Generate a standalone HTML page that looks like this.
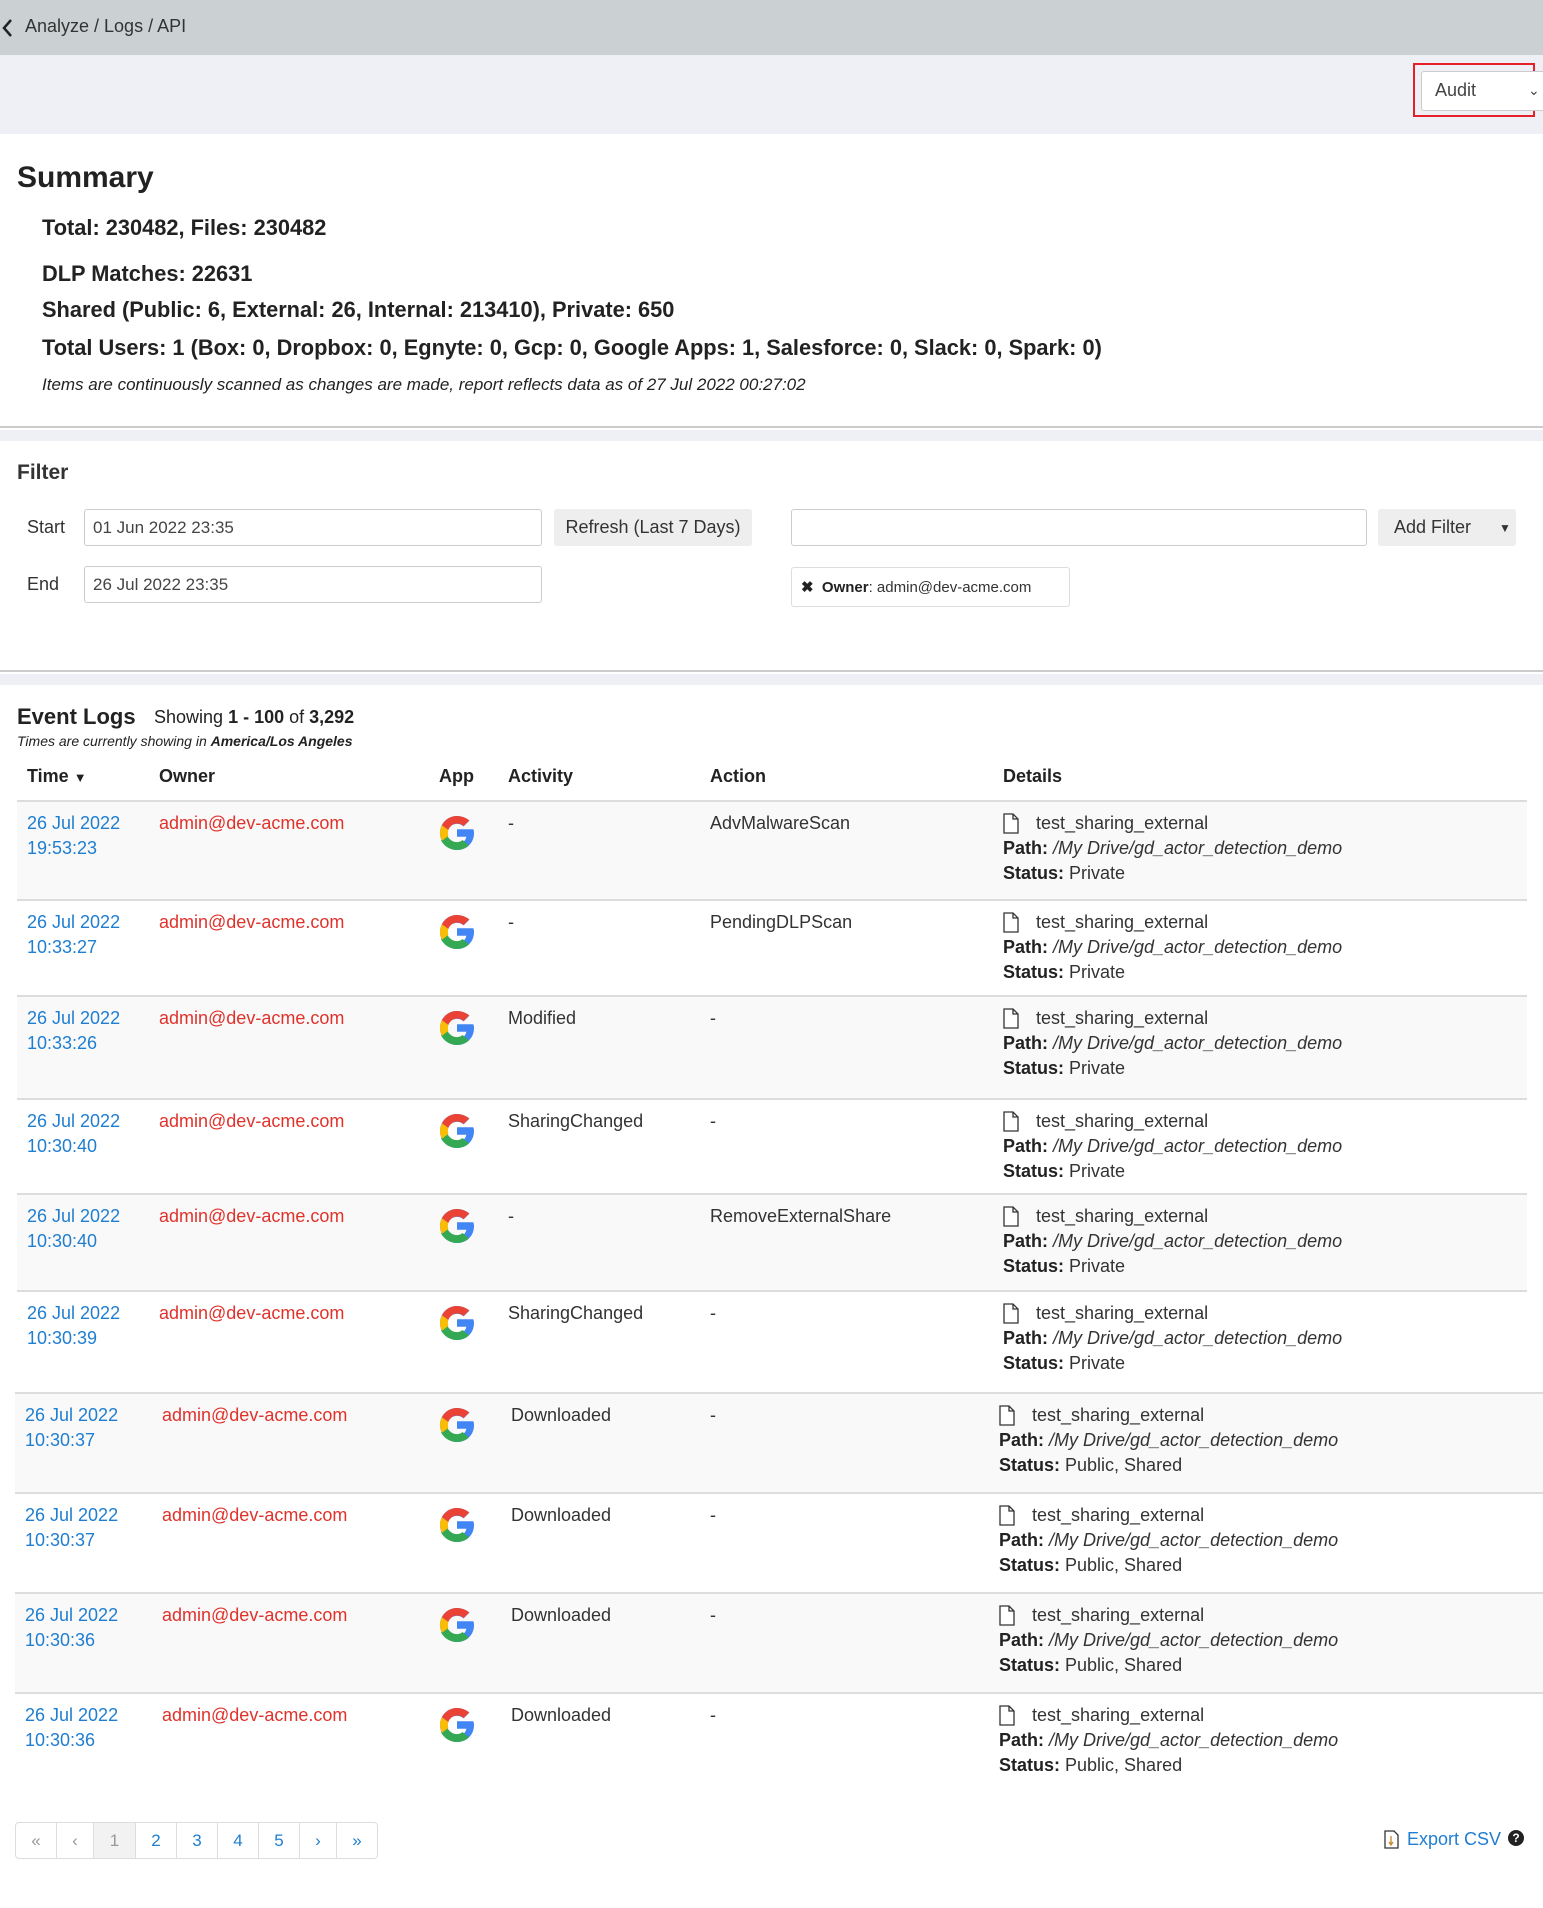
<!DOCTYPE html>
<html><head><meta charset="utf-8"><style>
*{box-sizing:border-box;margin:0;padding:0}
body{width:1543px;height:1908px;background:#fff;font-family:"Liberation Sans",Arial,sans-serif;color:#333;position:relative;overflow:hidden;font-size:18px}
.a{position:absolute;white-space:nowrap}
.inp{position:absolute;border:1px solid #ccc;border-radius:3px;background:#fff;font-size:17px;padding-left:8px;display:flex;align-items:center;color:#444}
.btn{position:absolute;background:#eee;border-radius:3px;font-size:18px;display:flex;align-items:center;justify-content:center;color:#333}
.blue{color:#1f7ed0}.red{color:#e0322b}
.row{position:absolute;left:17px;width:1510px;border-top:2px solid #ddd}
.row .a{top:9px;line-height:25px;font-size:18px}
b{font-weight:bold;color:#222}
.s{font-size:21.8px;font-weight:bold;color:#222}
</style></head><body>
<div class="a" style="left:0;top:0;width:1543px;height:55px;background:#cbd0d3"></div>
<svg class="a" style="left:2px;top:18px" width="12" height="20"><path d="M9 2 L2 10 L9 18" stroke="#222" stroke-width="2.5" fill="none"/></svg>
<div class="a" style="left:25px;top:16px;font-size:18px;color:#333">Analyze / Logs / API</div>
<div class="a" style="left:0;top:55px;width:1543px;height:79px;background:#eff0f6"></div>
<div class="a" style="left:1413px;top:63px;width:122px;height:54px;border:2px solid #e4202a"></div>
<div class="a" style="left:1421px;top:71px;width:125px;height:40px;background:#fff;border:1px solid #ccc;border-radius:3px"></div>
<div class="a" style="left:1435px;top:80px;font-size:18px;color:#444">Audit</div>
<div class="a" style="left:1528px;top:82px;font-size:14px;color:#444">⌄</div>

<div class="a" style="left:0;top:134px;width:1543px;height:294px;background:#fff;border-bottom:2px solid #ccc"></div>
<div class="a" style="left:17px;top:161px;font-size:30px;font-weight:bold;color:#222">Summary</div>
<div class="a s" style="left:42px;top:215px">Total: 230482, Files: 230482</div>
<div class="a s" style="left:42px;top:261px">DLP Matches: 22631</div>
<div class="a s" style="left:42px;top:297px">Shared (Public: 6, External: 26, Internal: 213410), Private: 650</div>
<div class="a s" style="left:42px;top:335px">Total Users: 1 (Box: 0, Dropbox: 0, Egnyte: 0, Gcp: 0, Google Apps: 1, Salesforce: 0, Slack: 0, Spark: 0)</div>
<div class="a" style="left:42px;top:375px;font-size:17px;font-style:italic;color:#222">Items are continuously scanned as changes are made, report reflects data as of 27 Jul 2022 00:27:02</div>
<div class="a" style="left:0;top:430px;width:1543px;height:11px;background:#eff0f6"></div>

<div class="a" style="left:0;top:441px;width:1543px;height:231px;background:#fff;border-bottom:2px solid #ccc"></div>
<div class="a" style="left:17px;top:461px;font-size:21px;font-weight:bold;color:#333">Filter</div>
<div class="a" style="left:27px;top:517px;font-size:18px">Start</div>
<div class="inp" style="left:84px;top:509px;width:458px;height:37px">01 Jun 2022 23:35</div>
<div class="btn" style="left:554px;top:509px;width:198px;height:37px">Refresh (Last 7 Days)</div>
<div class="inp" style="left:791px;top:509px;width:576px;height:37px"></div>
<div class="btn" style="left:1378px;top:509px;width:138px;height:37px;justify-content:flex-start;padding-left:16px">Add Filter<span style="margin-left:28px;font-size:12px">▼</span></div>
<div class="a" style="left:27px;top:574px;font-size:18px">End</div>
<div class="inp" style="left:84px;top:566px;width:458px;height:37px">26 Jul 2022 23:35</div>
<div class="a" style="left:791px;top:567px;width:279px;height:40px;border:1px solid #ddd;border-radius:3px;font-size:15px;padding:10px 0 0 9px;color:#333"><b>✖&nbsp; Owner</b>: admin@dev-acme.com</div>
<div class="a" style="left:0;top:674px;width:1543px;height:11px;background:#eff0f6"></div>

<div class="a" style="left:17px;top:704px;font-size:22px;font-weight:bold;color:#222">Event Logs</div>
<div class="a" style="left:154px;top:707px;font-size:18px;color:#222">Showing <b>1 - 100</b> of <b>3,292</b></div>
<div class="a" style="left:17px;top:733px;font-size:14px;font-style:italic;color:#222">Times are currently showing in <b>America/Los Angeles</b></div>
<div class="a" style="left:27px;top:766px;font-size:18px;font-weight:bold;color:#222">Time <span style="font-size:13px">▼</span></div>
<div class="a" style="left:159px;top:766px;font-size:18px;font-weight:bold;color:#222">Owner</div>
<div class="a" style="left:439px;top:766px;font-size:18px;font-weight:bold;color:#222">App</div>
<div class="a" style="left:508px;top:766px;font-size:18px;font-weight:bold;color:#222">Activity</div>
<div class="a" style="left:710px;top:766px;font-size:18px;font-weight:bold;color:#222">Action</div>
<div class="a" style="left:1003px;top:766px;font-size:18px;font-weight:bold;color:#222">Details</div>

<svg width="0" height="0" style="position:absolute"><defs>
<g id="G"><path d="M35.5 16.4H20v7.2h8.9c-.8 4.3-4.6 7.1-8.9 7.1-5.4 0-9.7-4.4-9.7-9.7s4.3-9.7 9.7-9.7c2.4 0 4.6.9 6.3 2.4l5.4-5.4C28.6 5.5 24.5 3.8 20 3.8 11 3.8 3.8 11 3.8 20S11 36.2 20 36.2c8.9 0 16.2-6.5 16.2-16.2 0-1.2-.2-2.5-.7-3.6z" fill="#4285f4"/>
<path d="M5.6 12.6l6.2 4.5C13.2 13.5 16.4 11 20 11c2.4 0 4.6.9 6.3 2.4l5.4-5.4C28.6 5.5 24.5 3.8 20 3.8 13.7 3.8 8.3 7.3 5.6 12.6z" fill="#ea4335"/>
<path d="M20 36.2c4.4 0 8.4-1.7 11.4-4.4l-6.1-5.1c-1.4 1.2-3.300 2-5.300 2-4.300 0-7.900-2.700-9.200-6.500l-6.100 4.700C7.400 32.300 13.200 36.200 20 36.200z" fill="#34a853"/>
<path d="M5.6 12.6C4.500 14.800 3.800 17.300 3.800 20s.7 5.200 1.900 7.400l6.100-4.700c-.3-.9-.5-1.800-.5-2.700s.2-1.900.5-2.800z" fill="#fbbc05"/></g>
<g id="F"><path d="M1 1h9l5 5v14H1z M10 1v5h5" fill="#fff" stroke="#333" stroke-width="1.3"/></g>
</defs></svg>

<div class="row" style="top:800px;height:99px;background:#f9f9f9">
<div class="a blue" style="left:10px">26 Jul 2022<br>19:53:23</div><div class="a red" style="left:142px">admin@dev-acme.com</div>
<svg class="a" style="left:419px;top:10px" width="42" height="42" viewBox="0 0 40 40"><use href="#G"/></svg>
<div class="a" style="left:491px">-</div><div class="a" style="left:693px">AdvMalwareScan</div>
<svg class="a" style="left:986px;top:11px" width="17" height="22"><use href="#F"/></svg>
<div class="a" style="left:986px"><span style="margin-left:33px">test_sharing_external</span><br><b>Path:</b> <i>/My Drive/gd_actor_detection_demo</i><br><b>Status:</b> Private</div></div>

<div class="row" style="top:899px;height:96px">
<div class="a blue" style="left:10px">26 Jul 2022<br>10:33:27</div><div class="a red" style="left:142px">admin@dev-acme.com</div>
<svg class="a" style="left:419px;top:10px" width="42" height="42" viewBox="0 0 40 40"><use href="#G"/></svg>
<div class="a" style="left:491px">-</div><div class="a" style="left:693px">PendingDLPScan</div>
<svg class="a" style="left:986px;top:11px" width="17" height="22"><use href="#F"/></svg>
<div class="a" style="left:986px"><span style="margin-left:33px">test_sharing_external</span><br><b>Path:</b> <i>/My Drive/gd_actor_detection_demo</i><br><b>Status:</b> Private</div></div>

<div class="row" style="top:995px;height:103px;background:#f9f9f9">
<div class="a blue" style="left:10px">26 Jul 2022<br>10:33:26</div><div class="a red" style="left:142px">admin@dev-acme.com</div>
<svg class="a" style="left:419px;top:10px" width="42" height="42" viewBox="0 0 40 40"><use href="#G"/></svg>
<div class="a" style="left:491px">Modified</div><div class="a" style="left:693px">-</div>
<svg class="a" style="left:986px;top:11px" width="17" height="22"><use href="#F"/></svg>
<div class="a" style="left:986px"><span style="margin-left:33px">test_sharing_external</span><br><b>Path:</b> <i>/My Drive/gd_actor_detection_demo</i><br><b>Status:</b> Private</div></div>

<div class="row" style="top:1098px;height:95px">
<div class="a blue" style="left:10px">26 Jul 2022<br>10:30:40</div><div class="a red" style="left:142px">admin@dev-acme.com</div>
<svg class="a" style="left:419px;top:10px" width="42" height="42" viewBox="0 0 40 40"><use href="#G"/></svg>
<div class="a" style="left:491px">SharingChanged</div><div class="a" style="left:693px">-</div>
<svg class="a" style="left:986px;top:11px" width="17" height="22"><use href="#F"/></svg>
<div class="a" style="left:986px"><span style="margin-left:33px">test_sharing_external</span><br><b>Path:</b> <i>/My Drive/gd_actor_detection_demo</i><br><b>Status:</b> Private</div></div>

<div class="row" style="top:1193px;height:97px;background:#f9f9f9">
<div class="a blue" style="left:10px">26 Jul 2022<br>10:30:40</div><div class="a red" style="left:142px">admin@dev-acme.com</div>
<svg class="a" style="left:419px;top:10px" width="42" height="42" viewBox="0 0 40 40"><use href="#G"/></svg>
<div class="a" style="left:491px">-</div><div class="a" style="left:693px">RemoveExternalShare</div>
<svg class="a" style="left:986px;top:11px" width="17" height="22"><use href="#F"/></svg>
<div class="a" style="left:986px"><span style="margin-left:33px">test_sharing_external</span><br><b>Path:</b> <i>/My Drive/gd_actor_detection_demo</i><br><b>Status:</b> Private</div></div>

<div class="row" style="top:1290px;height:102px">
<div class="a blue" style="left:10px">26 Jul 2022<br>10:30:39</div><div class="a red" style="left:142px">admin@dev-acme.com</div>
<svg class="a" style="left:419px;top:10px" width="42" height="42" viewBox="0 0 40 40"><use href="#G"/></svg>
<div class="a" style="left:491px">SharingChanged</div><div class="a" style="left:693px">-</div>
<svg class="a" style="left:986px;top:11px" width="17" height="22"><use href="#F"/></svg>
<div class="a" style="left:986px"><span style="margin-left:33px">test_sharing_external</span><br><b>Path:</b> <i>/My Drive/gd_actor_detection_demo</i><br><b>Status:</b> Private</div></div>

<div class="row" style="top:1392px;height:100px;left:15px;width:1528px;background:#f9f9f9">
<div class="a blue" style="left:10px">26 Jul 2022<br>10:30:37</div><div class="a red" style="left:147px">admin@dev-acme.com</div>
<svg class="a" style="left:421px;top:10px" width="42" height="42" viewBox="0 0 40 40"><use href="#G"/></svg>
<div class="a" style="left:496px">Downloaded</div><div class="a" style="left:695px">-</div>
<svg class="a" style="left:984px;top:11px" width="17" height="22"><use href="#F"/></svg>
<div class="a" style="left:984px"><span style="margin-left:33px">test_sharing_external</span><br><b>Path:</b> <i>/My Drive/gd_actor_detection_demo</i><br><b>Status:</b> Public, Shared</div></div>

<div class="row" style="top:1492px;height:100px;left:15px;width:1528px">
<div class="a blue" style="left:10px">26 Jul 2022<br>10:30:37</div><div class="a red" style="left:147px">admin@dev-acme.com</div>
<svg class="a" style="left:421px;top:10px" width="42" height="42" viewBox="0 0 40 40"><use href="#G"/></svg>
<div class="a" style="left:496px">Downloaded</div><div class="a" style="left:695px">-</div>
<svg class="a" style="left:984px;top:11px" width="17" height="22"><use href="#F"/></svg>
<div class="a" style="left:984px"><span style="margin-left:33px">test_sharing_external</span><br><b>Path:</b> <i>/My Drive/gd_actor_detection_demo</i><br><b>Status:</b> Public, Shared</div></div>

<div class="row" style="top:1592px;height:100px;left:15px;width:1528px;background:#f9f9f9">
<div class="a blue" style="left:10px">26 Jul 2022<br>10:30:36</div><div class="a red" style="left:147px">admin@dev-acme.com</div>
<svg class="a" style="left:421px;top:10px" width="42" height="42" viewBox="0 0 40 40"><use href="#G"/></svg>
<div class="a" style="left:496px">Downloaded</div><div class="a" style="left:695px">-</div>
<svg class="a" style="left:984px;top:11px" width="17" height="22"><use href="#F"/></svg>
<div class="a" style="left:984px"><span style="margin-left:33px">test_sharing_external</span><br><b>Path:</b> <i>/My Drive/gd_actor_detection_demo</i><br><b>Status:</b> Public, Shared</div></div>

<div class="row" style="top:1692px;height:100px;left:15px;width:1528px">
<div class="a blue" style="left:10px">26 Jul 2022<br>10:30:36</div><div class="a red" style="left:147px">admin@dev-acme.com</div>
<svg class="a" style="left:421px;top:10px" width="42" height="42" viewBox="0 0 40 40"><use href="#G"/></svg>
<div class="a" style="left:496px">Downloaded</div><div class="a" style="left:695px">-</div>
<svg class="a" style="left:984px;top:11px" width="17" height="22"><use href="#F"/></svg>
<div class="a" style="left:984px"><span style="margin-left:33px">test_sharing_external</span><br><b>Path:</b> <i>/My Drive/gd_actor_detection_demo</i><br><b>Status:</b> Public, Shared</div></div>

<div class="a" style="left:15px;top:1822px;height:37px;display:flex;border:1px solid #ddd;border-radius:4px;font-size:17px;overflow:hidden">
<span style="width:41px;text-align:center;line-height:35px;color:#999;border-right:1px solid #ddd">«</span>
<span style="width:37px;text-align:center;line-height:35px;color:#999;border-right:1px solid #ddd">‹</span>
<span style="width:42px;text-align:center;line-height:35px;color:#999;background:#f2f2f2;border-right:1px solid #ddd">1</span>
<span style="width:41px;text-align:center;line-height:35px;color:#1f7ed0;border-right:1px solid #ddd">2</span>
<span style="width:41px;text-align:center;line-height:35px;color:#1f7ed0;border-right:1px solid #ddd">3</span>
<span style="width:41px;text-align:center;line-height:35px;color:#1f7ed0;border-right:1px solid #ddd">4</span>
<span style="width:41px;text-align:center;line-height:35px;color:#1f7ed0;border-right:1px solid #ddd">5</span>
<span style="width:37px;text-align:center;line-height:35px;color:#1f7ed0;border-right:1px solid #ddd">›</span>
<span style="width:40px;text-align:center;line-height:35px;color:#1f7ed0">»</span>
</div>
<svg class="a" style="left:1384px;top:1830px" width="15" height="19"><path d="M1 1h9l4 4v13H1z" fill="#fff" stroke="#333" stroke-width="1.3"/><path d="M7 6v8M5 12l2 3 2-3" stroke="#c8862a" stroke-width="1.3" fill="none"/></svg>
<div class="a blue" style="left:1407px;top:1829px;font-size:18px">Export CSV</div>
<div class="a" style="left:1508px;top:1830px;width:16px;height:16px;border-radius:50%;background:#222;color:#fff;font-size:12px;font-weight:bold;text-align:center;line-height:16px">?</div>
</body></html>
